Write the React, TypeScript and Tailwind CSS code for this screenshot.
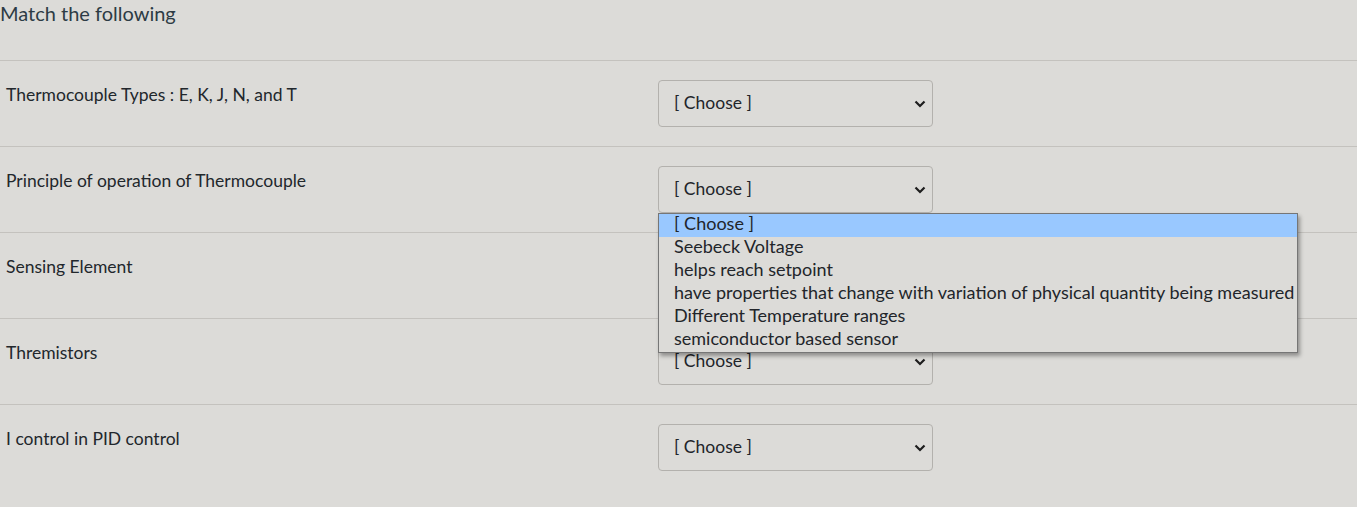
import React from "react";

const rows = [
  "Thermocouple Types : E, K, J, N, and T",
  "Principle of operation of Thermocouple",
  "Sensing Element",
  "Thremistors",
  "I control in PID control",
];

const options = [
  "[ Choose ]",
  "Seebeck Voltage",
  "helps reach setpoint",
  "have properties that change with variation of physical quantity being measured",
  "Different Temperature ranges",
  "semiconductor based sensor",
];

function Chevron() {
  return (
    <svg width="12" height="8" viewBox="0 0 12 8" className="shrink-0">
      <path d="M1.5 1.5 L6 6 L10.5 1.5" fill="none" stroke="#1e1e1e" strokeWidth="2.2" />
    </svg>
  );
}

function FakeSelect({ open }: { open?: boolean }) {
  return (
    <div className="relative w-[275px]">
      <div className="flex h-[47px] items-center justify-between rounded-[4px] border border-[#b3b1ad] pl-[15px] pr-[6px] text-[17.5px] text-[#22252a]">
        <span>[ Choose ]</span>
        <Chevron />
      </div>
      {open && (
        <div className="absolute left-0 top-full z-10 w-[640px] border border-[#767676] bg-[#dcdbd8] shadow-[2px_3px_4px_rgba(0,0,0,0.35)]">
          {options.map((o, i) => (
            <div
              key={o}
              className={
                "flex h-[23px] items-start whitespace-nowrap pl-[15px] text-[18px] leading-[19px] text-[#22252a] " +
                (i === 0 ? "bg-[#99c8ff]" : "")
              }
            >
              {o}
            </div>
          ))}
        </div>
      )}
    </div>
  );
}

export default function App() {
  return (
    <div
      className="min-h-[507px] w-full bg-[#dcdbd8] text-[#2d3b45]"
      style={{ fontFamily: "Lato, 'Noto Sans', sans-serif" }}
    >
      <div className="h-[60px] text-[20px] leading-[26px] text-[#2d3b45]">Match the following</div>
      {rows.map((label, i) => (
        <div key={label} className="flex items-start border-t border-[#c4c2be] py-[19px]">
          <div className="mt-[5px] w-[658px] pl-[6px] text-[17.5px] leading-[20px] text-[#22272c]">{label}</div>
          <FakeSelect open={i === 1} />
        </div>
      ))}
    </div>
  );
}
